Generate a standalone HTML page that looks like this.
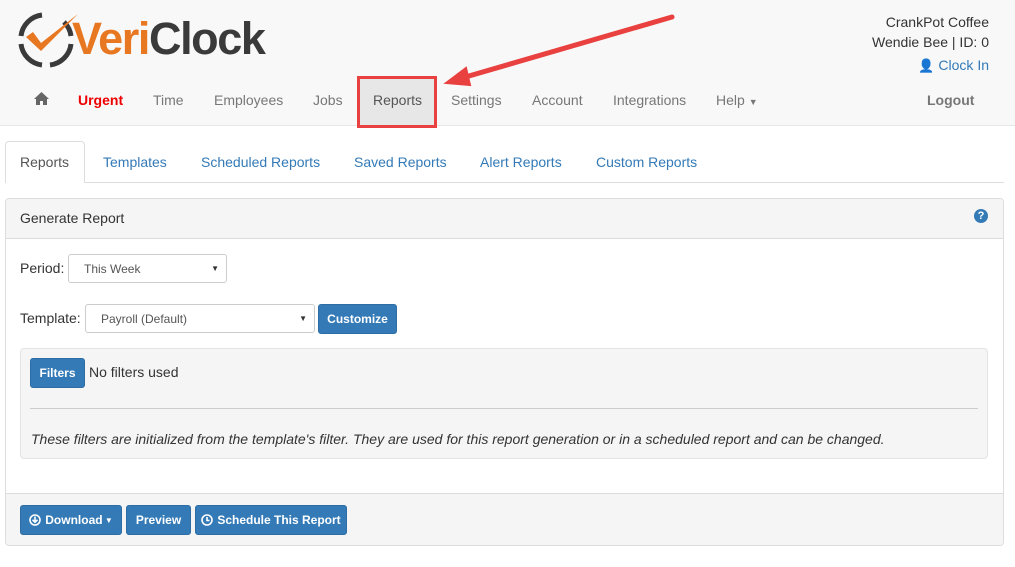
<!DOCTYPE html>
<html><head><style>
*{box-sizing:border-box}
body{margin:0;width:1015px;height:567px;background:#fff;font-family:"Liberation Sans",sans-serif;font-size:14px;color:#333;position:relative;overflow:hidden}
.a{position:absolute;white-space:nowrap}
.hdr{position:absolute;left:0;top:0;width:1015px;height:126px;background:#f8f8f8;border-bottom:1px solid #e7e7e7}
.nav{color:#777;font-size:14px;top:92px}
.tab{color:#337ab7;top:154px}
.btn{position:absolute;background:#337ab7;border:1px solid #2e6da4;border-radius:3px;color:#fff;font-size:12px;font-weight:bold;display:flex;align-items:center;justify-content:center}
.sel{position:absolute;border:1px solid #ccc;border-radius:3px;background:#fff;font-size:12px;color:#555;padding-left:15px;display:flex;align-items:center}
.sel:after{content:"▼";position:absolute;right:7px;font-size:8px;color:#333}
</style></head><body>
<div class="hdr"></div>
<svg class="a" style="left:16px;top:10px" width="62" height="58" viewBox="0 0 62 58">
<g fill="none" stroke="#3a3a3a" stroke-width="5">
<path d="M26 5 A24 24 0 0 0 5 26"/><path d="M5 34 A24 24 0 0 0 26 55"/><path d="M34 55 A24 24 0 0 0 55 34"/><path d="M55 26 A24 24 0 0 0 48 12"/>
</g>
<path d="M10 27 L25 41 L62 4 L25 33 L17 22 Z" fill="#e87722"/>
</svg>
<div class="a" style="left:72px;top:10px;font-size:45px;font-weight:bold;letter-spacing:-1.4px;line-height:58px"><span style="color:#e87722">Veri</span><span style="color:#3a3a3a">Clock</span></div>
<div class="a" style="right:26px;top:12px;text-align:right;line-height:20px;font-size:14px;color:#333">CrankPot Coffee<br>Wendie Bee | ID: 0</div>
<div class="a" style="right:26px;top:57px;color:#337ab7;font-size:14px"><span style="font-size:13px">&#128100;</span> Clock In</div>
<svg class="a" style="left:34px;top:92px" width="15" height="13" viewBox="0 0 15 13"><path d="M7.5 0 L15 7 L13 7 L13 13 L9 13 L9 9 L6 9 L6 13 L2 13 L2 7 L0 7Z" fill="#666"/></svg>
<div class="a" style="left:357px;top:76px;width:80px;height:50px;background:#e7e7e7"></div>
<div class="a nav" style="left:78px;color:#e00;font-weight:bold">Urgent</div>
<div class="a nav" style="left:153px">Time</div>
<div class="a nav" style="left:214px">Employees</div>
<div class="a nav" style="left:313px">Jobs</div>
<div class="a nav" style="left:373px;color:#555">Reports</div>
<div class="a nav" style="left:451px">Settings</div>
<div class="a nav" style="left:532px">Account</div>
<div class="a nav" style="left:613px">Integrations</div>
<div class="a nav" style="left:716px">Help <span style="font-size:9px">▼</span></div>
<div class="a nav" style="left:927px;font-weight:bold">Logout</div>
<div class="a" style="left:357px;top:76px;width:80px;height:52px;border:3px solid #e8413f"></div>
<svg class="a" style="left:0;top:0" width="1015" height="130"><line x1="672" y1="17" x2="462" y2="78" stroke="#e8413f" stroke-width="5" stroke-linecap="round"/><path d="M446 83 L466 68 L470 85Z" fill="#e8413f" stroke="#e8413f" stroke-width="2"/></svg>
<div class="a" style="left:5px;top:182px;width:999px;border-top:1px solid #ddd"></div>
<div class="a" style="left:5px;top:141px;width:80px;height:42px;border:1px solid #ddd;border-bottom:none;background:#fff;border-radius:4px 4px 0 0"></div>
<div class="a" style="left:20px;top:154px;color:#555">Reports</div>
<div class="a tab" style="left:103px">Templates</div>
<div class="a tab" style="left:201px">Scheduled Reports</div>
<div class="a tab" style="left:354px">Saved Reports</div>
<div class="a tab" style="left:480px">Alert Reports</div>
<div class="a tab" style="left:596px">Custom Reports</div>
<div class="a" style="left:5px;top:198px;width:999px;height:348px;border:1px solid #ddd;border-radius:4px;overflow:hidden">
<div style="height:40px;background:#f5f5f5;border-bottom:1px solid #ddd"></div>
<div style="position:absolute;bottom:0;left:0;right:0;height:52px;background:#f5f5f5;border-top:1px solid #ddd"></div>
</div>
<div class="a" style="left:20px;top:210px">Generate Report</div>
<div class="a" style="left:974px;top:209px;width:14px;height:14px;border-radius:50%;background:#337ab7;color:#fff;font-size:11px;font-weight:bold;text-align:center;line-height:14px">?</div>
<div class="a" style="left:20px;top:260px">Period:</div>
<div class="sel" style="left:68px;top:254px;width:159px;height:29px">This Week</div>
<div class="a" style="left:20px;top:310px">Template:</div>
<div class="sel" style="left:85px;top:304px;width:230px;height:29px">Payroll (Default)</div>
<div class="btn" style="left:318px;top:304px;width:79px;height:30px">Customize</div>
<div class="a" style="left:20px;top:348px;width:968px;height:111px;background:#f5f5f5;border:1px solid #e3e3e3;border-radius:4px"></div>
<div class="btn" style="left:30px;top:358px;width:55px;height:30px">Filters</div>
<div class="a" style="left:89px;top:364px">No filters used</div>
<div class="a" style="left:30px;top:408px;width:948px;border-top:1px solid #ccc"></div>
<div class="a" style="left:31px;top:431px;font-style:italic;font-size:14px">These filters are initialized from the template's filter. They are used for this report generation or in a scheduled report and can be changed.</div>
<div class="btn" style="left:20px;top:505px;width:102px;height:30px"><svg width="12" height="12" viewBox="0 0 12 12" style="margin-right:4px"><circle cx="6" cy="6" r="5" fill="none" stroke="#fff" stroke-width="1.6"/><path d="M6 2.5V8M3.5 5.8L6 8.3 8.5 5.8" fill="none" stroke="#fff" stroke-width="1.6"/></svg>Download <span style="font-size:8px">&nbsp;▼</span></div>
<div class="btn" style="left:126px;top:505px;width:65px;height:30px">Preview</div>
<div class="btn" style="left:195px;top:505px;width:152px;height:30px"><svg width="12" height="12" viewBox="0 0 12 12" style="margin-right:4px"><circle cx="6" cy="6" r="5" fill="none" stroke="#fff" stroke-width="1.6"/><path d="M6 3V6.5H8.5" fill="none" stroke="#fff" stroke-width="1.6"/></svg>Schedule This Report</div>
</body></html>
